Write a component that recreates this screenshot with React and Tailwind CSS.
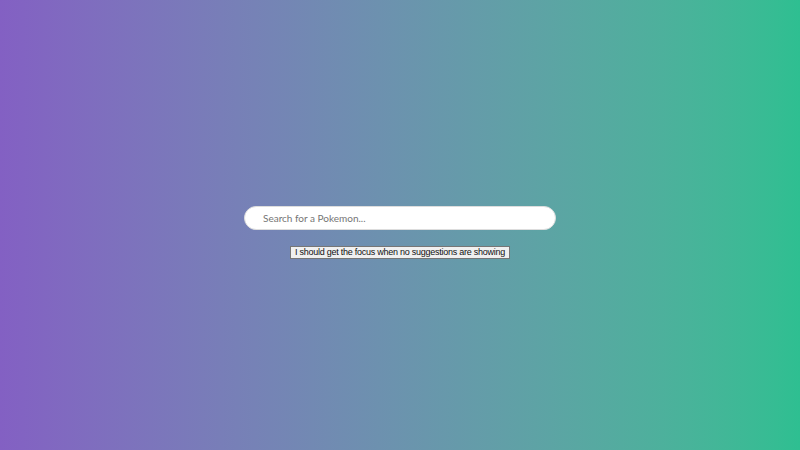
export default function App() {
  return (
    <div className="h-screen w-full flex flex-col items-center justify-center bg-gradient-to-r from-[#8360c3] to-[#2ebf91] pt-[14px]">
      <input
        type="text"
        placeholder="Search for a Pokemon..."
        className="w-[312px] h-[24px] rounded-full bg-white border border-[#dddddd] pl-[18px] pr-4 text-[10px] text-gray-700 placeholder:text-[#757575] outline-none font-['Lato',sans-serif]"
      />
      <button className="mt-[16px] h-[13px] px-[4px] bg-[#f0f0f0] border border-[#767676] text-[9px] tracking-[-0.25px] leading-none text-[#111] font-['Liberation_Sans',Arial,sans-serif]">
        I should get the focus when no suggestions are showing
      </button>
    </div>
  );
}
